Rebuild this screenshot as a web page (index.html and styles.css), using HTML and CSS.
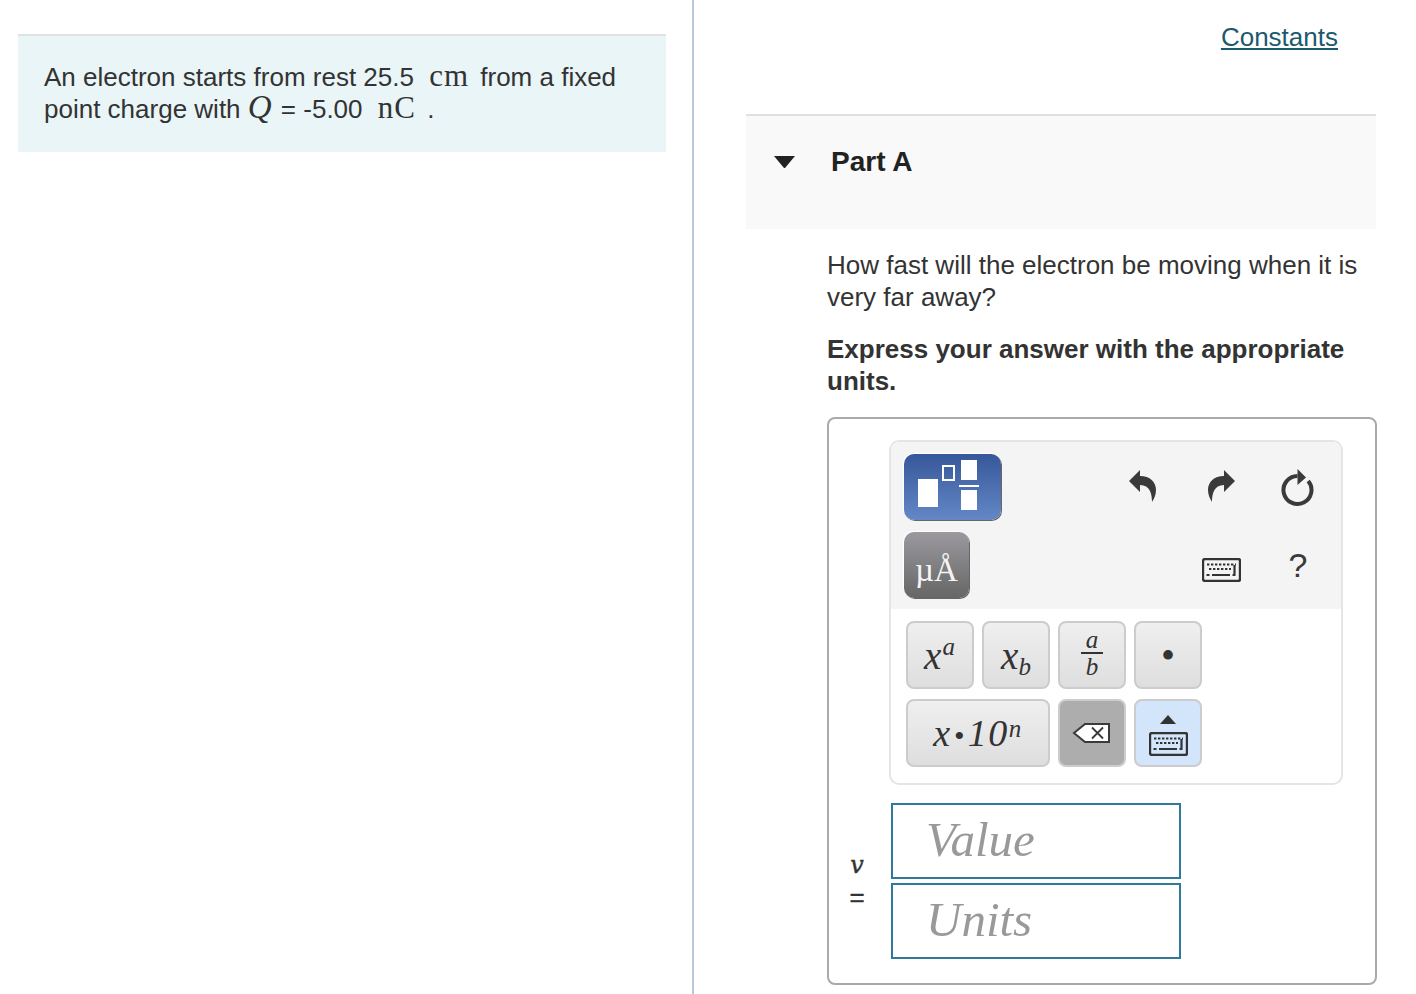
FILE: index.html
```html
<!DOCTYPE html>
<html lang="en">
<head>
<meta charset="utf-8">
<title>Part A</title>
<link rel="stylesheet" href="styles.css">
</head>
<body>
<main class="page">
  <section class="left">
    <div class="intro">
      <p>An electron starts from rest 25.5 <span class="unit">cm</span> from a fixed point charge with <i class="var">Q</i> = -5.00 <span class="unit">nC</span> .</p>
    </div>
  </section>
  <section class="right">
    <div class="links"><a href="#" class="constants">Constants</a></div>
    <header class="part-head">
      <span class="caret"></span>
      <h2>Part A</h2>
    </header>
    <div class="part-body">
      <p class="q">How fast will the electron be moving when it is very far away?</p>
      <p class="q strong">Express your answer with the appropriate units.</p>
      <div class="answer">
        <div class="editor">
          <div class="tools">
            <div class="tool-row">
              <button class="pal pal-blue" aria-label="Templates">
                <svg width="97" height="66" viewBox="0 0 97 66"><rect x="14" y="25" width="20" height="28" fill="#fff"/><rect x="39" y="12" width="11" height="14" fill="none" stroke="#fff" stroke-width="2"/><rect x="57" y="6" width="16" height="20" fill="#fff"/><rect x="55" y="31" width="20" height="2" fill="#fff"/><rect x="57" y="36" width="16" height="20" fill="#fff"/></svg>
              </button>
              <div class="icons">
                <svg class="ico" width="28" height="34" viewBox="0 0 28 34"><path d="M0 12 L11 1 V7 C21 7 27 13 27 21 C27 26 25 30 23 33 C23 25 21 16 11 16 V23 Z" fill="#3a3a3a"/></svg>
                <svg class="ico" width="28" height="34" viewBox="0 0 28 34"><path d="M28 12 L17 1 V7 C7 7 1 13 1 21 C1 26 3 30 5 33 C5 25 7 16 17 16 V23 Z" fill="#3a3a3a"/></svg>
                <svg class="ico reset" width="34" height="38" viewBox="0 0 34 38"><path d="M16.500 7 A14 14 0 1 0 27.200 12" fill="none" stroke="#3a3a3a" stroke-width="4"/><path d="M16.500 0 L25 8.500 L16.500 16 Z" fill="#3a3a3a"/></svg>
              </div>
            </div>
            <div class="tool-row second">
              <button class="pal pal-gray">µÅ</button>
              <div class="icons lower">
                <svg class="kbd" width="39" height="24" viewBox="0 0 39 24"><rect x="1" y="1" width="37" height="22" rx="2" fill="none" stroke="#333" stroke-width="2.400"/><path d="M5 6.500h29M7 11h22" stroke="#333" stroke-width="2.200" stroke-dasharray="2.400 1.600"/><path d="M10 17h18M4.500 17h3M30.500 17h3M32.500 7v10" stroke="#333" stroke-width="2.200"/></svg>
                <span class="help">?</span>
              </div>
            </div>
          </div>
          <div class="keys">
            <button class="key"><i>x<sup>a</sup></i></button>
            <button class="key"><i>x<sub>b</sub></i></button>
            <button class="key frac"><i class="num">a</i><i class="den">b</i></button>
            <button class="key dot">•</button>
            <button class="key wide"><i>x<span class="mid">•</span>10<sup>n</sup></i></button>
            <button class="key del" aria-label="Delete">
              <svg width="40" height="22" viewBox="0 0 40 22"><path d="M13 2 H37 V20 H13 L2 11 Z" fill="#fff" stroke="#3a3a3a" stroke-width="2"/><path d="M20 5.500 L31 16.500 M31 5.500 L20 16.500" stroke="#3a3a3a" stroke-width="1.800"/></svg>
            </button>
            <button class="key kb" aria-label="Keyboard">
              <span class="up"></span>
              <svg width="39" height="24" viewBox="0 0 39 24"><rect x="1" y="1" width="37" height="22" rx="2" fill="none" stroke="#333" stroke-width="2.400"/><path d="M5 6.500h29M7 11h22" stroke="#333" stroke-width="2.200" stroke-dasharray="2.400 1.600"/><path d="M10 17h18M4.500 17h3M30.500 17h3M32.500 7v10" stroke="#333" stroke-width="2.200"/></svg>
            </button>
          </div>
        </div>
        <div class="entry">
          <div class="lbl"><i class="v">v</i><span class="eq">=</span></div>
          <div class="fields">
            <div class="field">Value</div>
            <div class="field">Units</div>
          </div>
        </div>
      </div>
    </div>
  </section>
</main>
</body>
</html>
```

FILE: styles.css
```css
* { box-sizing: border-box; }
html, body { margin: 0; padding: 0; background: #fff; }
body { font-family: "Liberation Sans", Arial, sans-serif; color: #333; overflow: hidden; }
p, h2 { margin: 0; }

.page { display: flex; width: 1416px; height: 994px; overflow: hidden; }

.left { width: 694px; flex: none; border-right: 2px solid #b9c7da; padding: 34px 26px 0 18px; }
.intro { height: 118px; background: #e9f5f7; border-top: 2px solid #dfe3e4; padding: 25px 26px 0; font-size: 26px; line-height: 32px; color: #333; }
.unit { font-family: "Liberation Serif", serif; font-size: 31px; line-height: 0; margin: 0 4px 0 8px; letter-spacing: 1px; }
.var { font-family: "Liberation Serif", serif; font-size: 33px; line-height: 0; margin-right: 2px; }

.right { width: 682px; flex: none; padding-left: 52px; }
.links { height: 114px; padding: 20px 38px 0 0; text-align: right; line-height: 34px; }
.constants { font-size: 26px; color: #1b5a6e; text-decoration: underline; }

.part-head { width: 630px; height: 115px; background: #f9f9f9; border-top: 2px solid #e0e0e0; display: flex; padding: 30px 0 0 28px; }
.caret { width: 21px; height: 12px; margin-top: 10px; flex: none; border-left: 10.500px solid transparent; border-right: 10.500px solid transparent; border-top: 12px solid #222; }
.part-head h2 { margin-left: 36px; font-size: 28px; line-height: 32px; font-weight: 700; color: #222; }

.part-body { padding: 20px 0 0 81px; width: 631px; }
.q { font-size: 26px; line-height: 32px; margin-bottom: 20px; width: 545px; }
.strong { font-weight: 700; margin-bottom: 20px; }

.answer { width: 550px; height: 568px; border: 2px solid #aaa; border-radius: 8px; padding-top: 21px; }
.editor { width: 454px; height: 345px; margin-left: 60px; border: 2px solid #e5e5e5; border-radius: 10px; overflow: hidden; background: #fff; }
.tools { height: 167px; background: #f4f4f4; padding: 12px 0 0 13px; }
.tool-row { display: flex; justify-content: space-between; height: 78px; }
.second { height: 70px; }
.pal { width: 97px; height: 66px; padding: 0; border: 0; border-radius: 10px; display: block; background: linear-gradient(#36589a, #6487c6); box-shadow: 1px 1px 0 #666, -1px -1px 0 #fff; }
.pal-gray { width: 65px; background: linear-gradient(#9b999e, #666); color: #f4f4f4; font-family: "Liberation Serif", serif; font-size: 33px; line-height: 76px; }
.icons { display: flex; align-items: flex-start; padding: 15px 26px 0 0; }
.reset { margin-left: 46px; }
.ico:nth-child(2) { margin-left: 50px; }
.lower { gap: 45px; padding: 15px 29px 0 0; }
.kbd { margin-top: 11px; }
.help { font-size: 34px; line-height: 36px; width: 30px; text-align: center; margin-left: -3px; margin-right: -1px; color: #3a3a3a; }

.keys { display: grid; grid-template-columns: repeat(4, 68px); grid-auto-rows: 68px; gap: 10px 8px; padding: 12px 0 0 15px; }
.key { padding: 0; border: 2px solid #ccc; border-radius: 8px; background: linear-gradient(#efefef, #dedede); font-family: "Liberation Serif", serif; font-size: 39px; color: #333; display: flex; flex-direction: column; align-items: center; justify-content: center; }
.key i { line-height: 1; }
.key:first-child i { letter-spacing: 1px; }
.key sup { font-size: 25px; line-height: 0; vertical-align: 14px; }
.key sub { font-size: 25px; line-height: 0; vertical-align: -6px; }
.frac { padding-bottom: 4px; }
.frac .num, .frac .den { font-size: 25px; line-height: 25px; width: 22px; text-align: center; }
.frac .num { border-bottom: 2px solid #333; }
.dot { font-size: 40px; }
.wide { grid-column: span 2; font-size: 38px; }
.wide i { letter-spacing: 1.500px; }
.wide sup { vertical-align: 9px; }
.mid { font-size: 30px; margin: 0 2px; }
.del { background: #adadad; }
.kb { background: #d3e5fb; gap: 8px; padding-top: 4px; }
.up { width: 0; height: 0; border-left: 8px solid transparent; border-right: 8px solid transparent; border-bottom: 9px solid #333; }

.entry { display: flex; margin-top: 18px; align-items: center; }
.lbl { width: 62px; display: flex; flex-direction: column; align-items: center; font-family: "Liberation Serif", serif; font-size: 26px; line-height: 32px; padding-right: 6px; }
.lbl .v { font-family: "DejaVu Serif", serif; font-size: 24px; -webkit-text-stroke: .4px #333; }
.eq { font-family: "Liberation Sans", sans-serif; -webkit-text-stroke: .4px #333; }
.fields { display: flex; flex-direction: column; gap: 4px; }
.field { width: 290px; height: 76px; border: 2px solid #2f7a9b; padding-left: 33px; font-family: "Liberation Serif", serif; font-style: italic; font-size: 49px; line-height: 70px; color: #999; }
```
